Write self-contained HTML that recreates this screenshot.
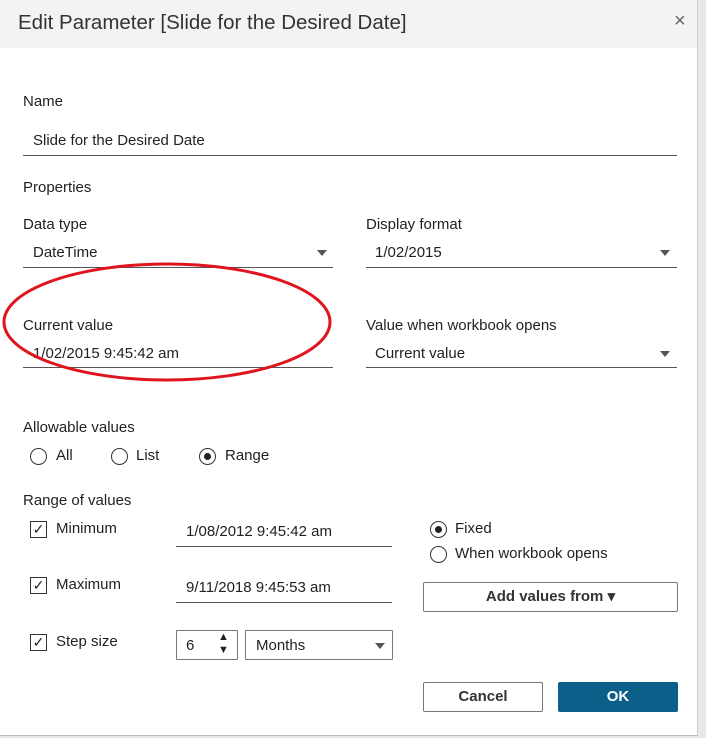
<!DOCTYPE html><html><head><style>
body{margin:0;width:706px;height:738px;background:#e8e8e8;position:relative;overflow:hidden;font-family:"Liberation Sans Narrow","Liberation Sans",sans-serif;color:#222;font-size:15px}
.dlg{position:absolute;left:0;top:0;width:697px;height:735px;background:#fff;border-right:1px solid #ccc;border-bottom:1px solid #bbb}
.hd{position:absolute;left:0;top:0;width:697px;height:48px;background:#f3f3f3}
.a{position:absolute;white-space:nowrap}
.ul{position:absolute;border-bottom:1px solid #555}
.tri{position:absolute;width:0;height:0;border-left:5px solid transparent;border-right:5px solid transparent;border-top:6px solid #555}
.cb{position:absolute;width:15px;height:15px;border:1px solid #333;font-size:14px;line-height:15px;text-align:center}
.rd{position:absolute;width:15px;height:15px;border:1px solid #333;border-radius:50%}
.rd.on::after{content:"";position:absolute;left:4px;top:4px;width:7px;height:7px;border-radius:50%;background:#222}
.bx{position:absolute;border:1px solid #777;border-radius:2px;background:#fff}
</style></head><body>
<div class="dlg">
<div class="hd"><div class="a" style="left:18px;top:11px;font-size:20.5px;color:#333">Edit Parameter [Slide for the Desired Date]</div>
<div class="a" style="left:674px;top:10px;font-size:20px;color:#666">×</div></div>
<div class="a" style="left:23px;top:93px">Name</div>
<div class="a" style="left:33px;top:132px">Slide for the Desired Date</div>
<div class="ul" style="left:23px;top:155px;width:654px"></div>
<div class="a" style="left:23px;top:179px">Properties</div>
<div class="a" style="left:23px;top:216px">Data type</div>
<div class="a" style="left:33px;top:244px">DateTime</div>
<div class="tri" style="left:317px;top:250px"></div>
<div class="ul" style="left:23px;top:267px;width:310px"></div>
<div class="a" style="left:366px;top:216px">Display format</div>
<div class="a" style="left:375px;top:244px">1/02/2015</div>
<div class="tri" style="left:660px;top:250px"></div>
<div class="ul" style="left:366px;top:267px;width:311px"></div>
<div class="a" style="left:23px;top:317px">Current value</div>
<div class="a" style="left:33px;top:345px">1/02/2015 9:45:42 am</div>
<div class="ul" style="left:23px;top:367px;width:310px"></div>
<div class="a" style="left:366px;top:317px">Value when workbook opens</div>
<div class="a" style="left:375px;top:345px">Current value</div>
<div class="tri" style="left:660px;top:351px"></div>
<div class="ul" style="left:366px;top:367px;width:311px"></div>
<div class="a" style="left:23px;top:419px">Allowable values</div>
<div class="rd" style="left:30px;top:448px"></div><div class="a" style="left:56px;top:447px">All</div>
<div class="rd" style="left:111px;top:448px"></div><div class="a" style="left:136px;top:447px">List</div>
<div class="rd on" style="left:199px;top:448px"></div><div class="a" style="left:225px;top:447px">Range</div>
<div class="a" style="left:23px;top:492px">Range of values</div>
<div class="cb" style="left:30px;top:521px">✓</div><div class="a" style="left:56px;top:520px">Minimum</div>
<div class="a" style="left:186px;top:523px">1/08/2012 9:45:42 am</div>
<div class="ul" style="left:176px;top:546px;width:216px"></div>
<div class="rd on" style="left:430px;top:521px"></div><div class="a" style="left:455px;top:520px">Fixed</div>
<div class="rd" style="left:430px;top:546px"></div><div class="a" style="left:455px;top:545px">When workbook opens</div>
<div class="cb" style="left:30px;top:577px">✓</div><div class="a" style="left:56px;top:576px">Maximum</div>
<div class="a" style="left:186px;top:579px">9/11/2018 9:45:53 am</div>
<div class="ul" style="left:176px;top:602px;width:216px"></div>
<div class="bx" style="left:423px;top:582px;width:253px;height:28px;text-align:center;line-height:28px;font-weight:bold;color:#333">Add values from ▾</div>
<div class="cb" style="left:30px;top:634px">✓</div><div class="a" style="left:56px;top:633px">Step size</div>
<div class="bx" style="left:176px;top:630px;width:60px;height:28px;border-radius:1px"><span class="a" style="left:9px;top:6px">6</span><span class="a" style="left:41px;top:0;font-size:11px;line-height:13px">▲<br>▼</span></div>
<div class="bx" style="left:245px;top:630px;width:146px;height:28px;border-radius:1px"><span class="a" style="left:10px;top:6px">Months</span><div class="tri" style="left:129px;top:12px"></div></div>
<div class="bx" style="left:423px;top:682px;width:118px;height:28px;text-align:center;line-height:28px;font-weight:bold;color:#333">Cancel</div>
<div class="a" style="left:558px;top:682px;width:120px;height:30px;background:#0b5f88;color:#fff;font-weight:bold;text-align:center;line-height:30px;border-radius:2px">OK</div>
</div>
<svg class="a" style="left:0;top:0" width="706" height="738"><ellipse cx="167" cy="322" rx="163" ry="58" fill="none" stroke="#e0141e" stroke-width="3"/></svg>
</body></html>
